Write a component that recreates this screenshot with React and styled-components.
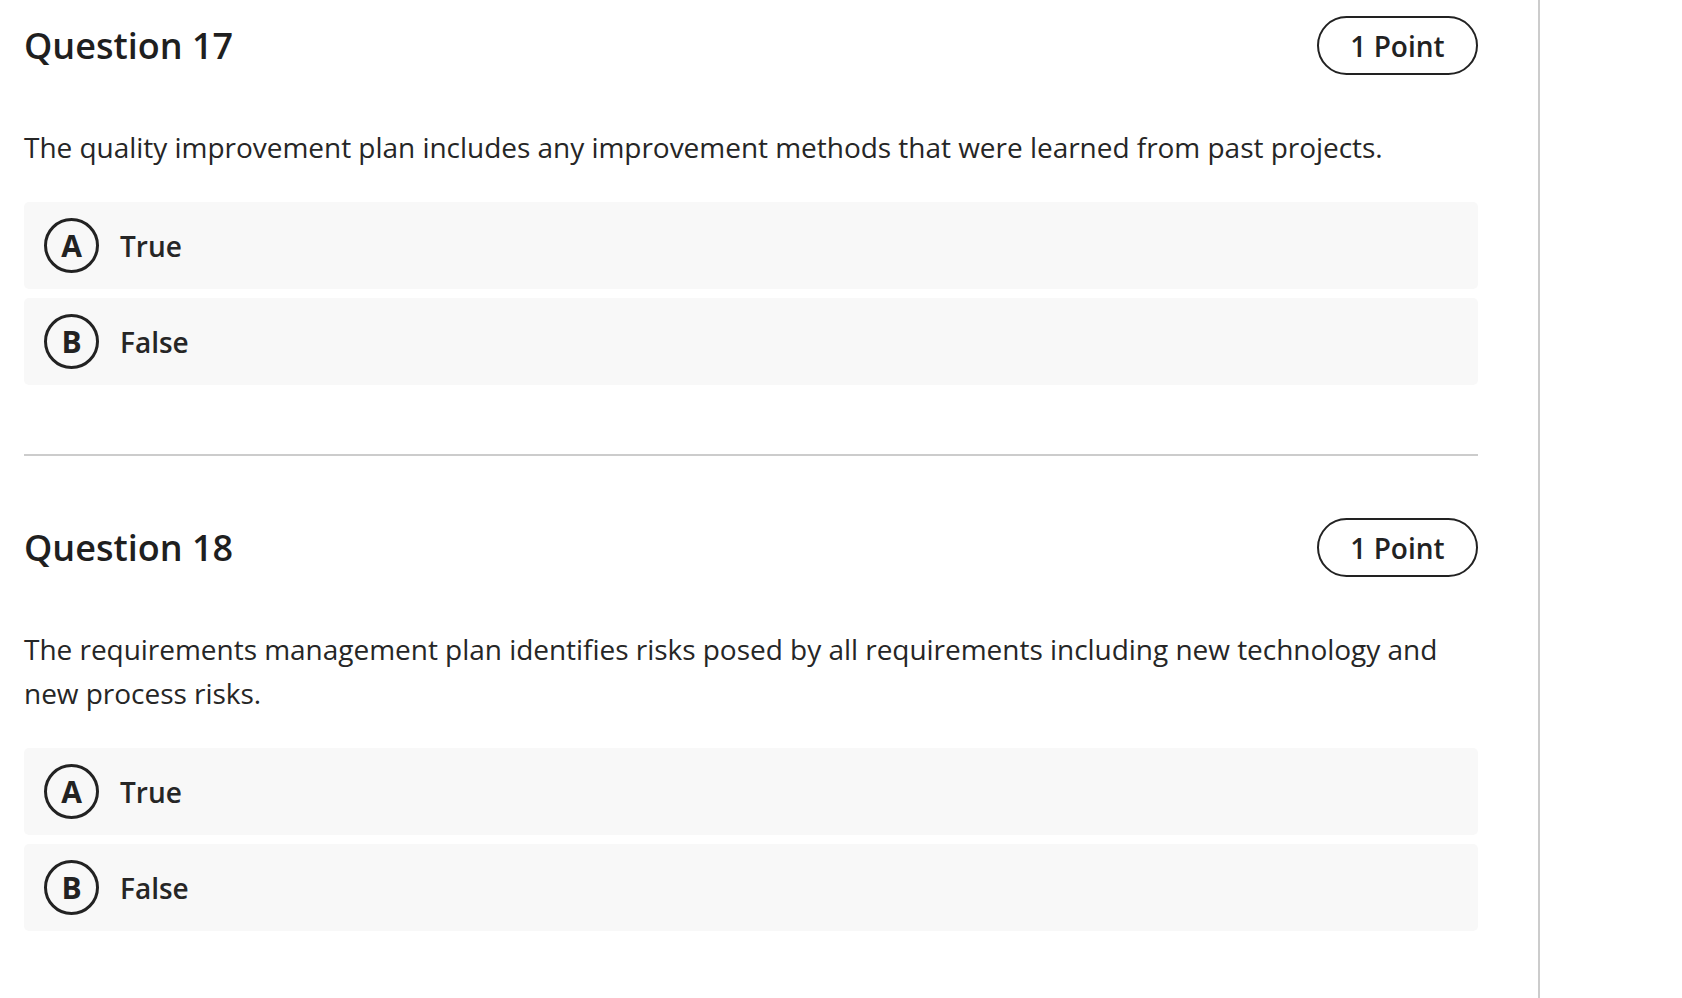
import styled, { createGlobalStyle } from 'styled-components';

const GlobalStyle = createGlobalStyle`
    html, body {
        margin: 0;
        padding: 0;
        background: #ffffff;
    }
    body {
        font-family: 'Open Sans', 'Noto Sans', sans-serif;
        color: #262626;
    }
`;

const Layout = styled.div`
    display: flex;
    min-height: 100vh;
`;

const Column = styled.main`
    width: 1540px;
    box-sizing: border-box;
    border-right: 2px solid #cccccc;
    padding: 16px 60px 40px 24px;
`;

const QuestionBlock = styled.section`
    display: flex;
    flex-direction: column;
`;

const Header = styled.div`
    display: flex;
    align-items: center;
    justify-content: space-between;
    height: 59px;
`;

const Title = styled.h2`
    margin: 0;
    font-size: 36px;
    font-weight: 600;
    color: #1f1f1f;
`;

const PointBadge = styled.div`
    box-sizing: border-box;
    height: 59px;
    width: 161px;
    border: 2px solid #222222;
    border-radius: 30px;
    display: flex;
    align-items: center;
    justify-content: center;
    font-size: 28px;
    font-weight: 600;
    color: #222222;
`;

const Prompt = styled.p`
    margin: 50px 0 33px;
    font-size: 28px;
    line-height: 44px;
    font-weight: 400;
    letter-spacing: -0.03px;
    color: #262626;
`;

const Options = styled.div`
    display: flex;
    flex-direction: column;
    gap: 9px;
`;

const Option = styled.div`
    height: 87px;
    box-sizing: border-box;
    display: flex;
    align-items: center;
    gap: 21px;
    padding-left: 20px;
    background: #f8f8f8;
    border-radius: 5px;
`;

const Letter = styled.span`
    box-sizing: border-box;
    width: 55px;
    height: 55px;
    border: 3px solid #222222;
    border-radius: 50%;
    display: flex;
    align-items: center;
    justify-content: center;
    font-size: 30px;
    font-weight: 700;
    color: #222222;
`;

const Label = styled.span`
    font-size: 28px;
    font-weight: 600;
    color: #262626;
`;

const Divider = styled.hr`
    margin: 69px 0 62px;
    border: none;
    border-top: 2px solid #cccccc;
`;

const questions = [
    {
        id: 17,
        text: 'The quality improvement plan includes any improvement methods that were learned from past projects.',
    },
    {
        id: 18,
        text: 'The requirements management plan identifies risks posed by all requirements including new technology and new process risks.',
    },
];

const choices = [
    { key: 'A', label: 'True' },
    { key: 'B', label: 'False' },
];

const Question = ({ id, text }) => (
    <QuestionBlock>
        <Header>
            <Title>Question {id}</Title>
            <PointBadge>1 Point</PointBadge>
        </Header>
        <Prompt>{text}</Prompt>
        <Options>
            {choices.map((c) => (
                <Option key={c.key}>
                    <Letter>{c.key}</Letter>
                    <Label>{c.label}</Label>
                </Option>
            ))}
        </Options>
    </QuestionBlock>
);

const App = () => {
    return (
        <>
            <GlobalStyle />
            <Layout>
                <Column>
                    {questions.map((q, i) => (
                        <div key={q.id}>
                            {i > 0 ? <Divider /> : null}
                            <Question id={q.id} text={q.text} />
                        </div>
                    ))}
                </Column>
            </Layout>
        </>
    );
};

export default App;
